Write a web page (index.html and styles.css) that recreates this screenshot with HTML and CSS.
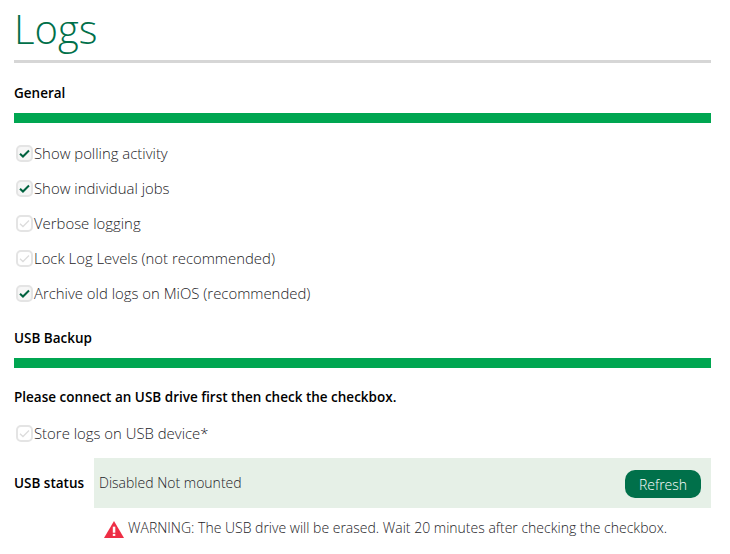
FILE: index.html
```
<!DOCTYPE html>
<html lang="en">
<head>
<meta charset="utf-8">
<title>Logs</title>
<link rel="stylesheet" href="styles.css">
</head>
<body>
<main class="page">
  <h1 class="title">Logs</h1>
  <h2 class="section-title first">General</h2>
  <div class="bar"></div>
  <ul class="options">
    <li class="option"><span class="box"><svg viewBox="0 0 12 10" class="tick"><path d="M1 5.2 4.3 8.4 11 1.6"/></svg></span>Show polling activity</li>
    <li class="option"><span class="box"><svg viewBox="0 0 12 10" class="tick"><path d="M1 5.2 4.3 8.4 11 1.6"/></svg></span>Show individual jobs</li>
    <li class="option"><span class="box off"><svg viewBox="0 0 12 10" class="tick"><path d="M1 5.2 4.3 8.4 11 1.6"/></svg></span>Verbose logging</li>
    <li class="option"><span class="box off"><svg viewBox="0 0 12 10" class="tick"><path d="M1 5.2 4.3 8.4 11 1.6"/></svg></span>Lock Log Levels (not recommended)</li>
    <li class="option"><span class="box"><svg viewBox="0 0 12 10" class="tick"><path d="M1 5.2 4.3 8.4 11 1.6"/></svg></span>Archive old logs on MiOS (recommended)</li>
  </ul>
  <h2 class="section-title">USB Backup</h2>
  <div class="bar"></div>
  <p class="notice">Please connect an USB drive first then check the checkbox.</p>
  <ul class="options single">
    <li class="option"><span class="box off"><svg viewBox="0 0 12 10" class="tick"><path d="M1 5.2 4.3 8.4 11 1.6"/></svg></span>Store logs on USB device*</li>
  </ul>
  <div class="status-row">
    <span class="status-label">USB status</span>
    <div class="status-panel">
      <span class="status-text">Disabled Not mounted</span>
      <button class="refresh" type="button">Refresh</button>
    </div>
  </div>
  <p class="warning">
    <svg class="warn-icon" viewBox="0 0 20 18" preserveAspectRatio="none"><path class="warn-tri" d="M10 0 20 18H0Z"/><rect class="warn-mark" x="8.8" y="6" width="2.5" height="6.4"/><rect class="warn-mark" x="8.8" y="13.6" width="2.5" height="2.2"/></svg>
    WARNING: The USB drive will be erased. Wait 20 minutes after checking the checkbox.
  </p>
</main>
</body>
</html>
```
FILE: styles.css
```
* { box-sizing: border-box; }
html, body { margin: 0; padding: 0; background: #fff; }
body {
  font-family: "Open Sans", "Liberation Sans", sans-serif;
  font-size: 14px;
  font-weight: 300;
  color: #1d2327;
}
.page { width: 711px; margin-left: 14px; height: 554px; overflow: hidden; }
.title {
  margin: 0;
  height: 63px;
  border-bottom: 3px solid #d6d6d6;
  font-size: 40px;
  line-height: 58px;
  font-weight: 300;
  color: #00704a;
  width: 697px;
}
.section-title {
  margin: 26px 0 0;
  font-size: 13.5px;
  line-height: 19px;
  font-weight: 600;
  color: #000;
}
.section-title.first { margin-top: 21px; }
.bar { width: 697px; height: 10px; margin-top: 10px; background: #00a651; }
.options { list-style: none; margin: 20px 0 0; padding: 0; display: flex; flex-direction: column; gap: 15px; font-size: 14.9px; }
.options.single { margin-top: 16px; }
.option { display: flex; align-items: center; height: 20px; }
.box {
  width: 17px;
  height: 17px;
  margin-left: 2px;
  margin-right: 1px;
  display: flex;
  align-items: center;
  justify-content: center;
  border: 2px solid #e4e4e4;
  border-radius: 5px;
  background: #f6f6f6;
  flex: none;
}
.tick { width: 11px; height: 9px; fill: none; stroke: #00623f; stroke-width: 2.2; }
.box.off { background: #fff; }
.box.off .tick { stroke: #dcdcdc; stroke-width: 1.4; }
.notice { margin: 20px 0 0; font-size: 13.5px; line-height: 19px; font-weight: 600; color: #000; }
.status-row { display: flex; align-items: center; width: 697px; margin-top: 15px; }
.status-label { width: 80px; font-size: 13.5px; font-weight: 600; color: #000; }
.status-panel {
  flex: 1;
  height: 50px;
  background: #e6f0e7;
  display: flex;
  align-items: center;
  justify-content: space-between;
  padding: 0 10px 0 5px;
}
.status-text { margin-bottom: 2px; }
.refresh {
  width: 76px;
  height: 28px;
  margin-top: 2px;
  border: 0;
  border-radius: 10px;
  background: #00704a;
  color: #fff;
  font: 300 14px "Open Sans", "Liberation Sans", sans-serif;
  padding: 0;
}
.warning { display: flex; align-items: center; gap: 4px; margin: 10px 0 0 90px; line-height: 20px; white-space: nowrap; }
.warn-icon { width: 20px; height: 17px; margin-top: 2px; flex: none; }
.warn-tri { fill: #ee2e45; }
.warn-mark { fill: #fff; }
```
